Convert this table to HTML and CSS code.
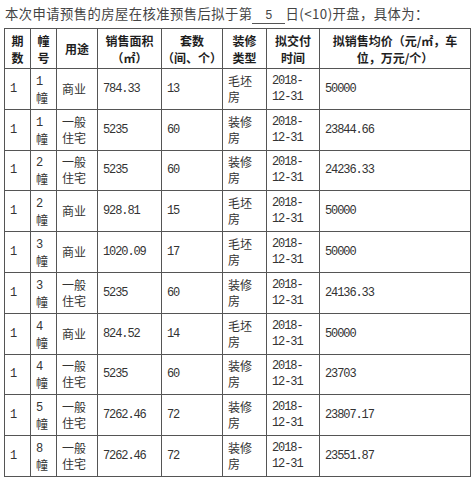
FILE: index.html
```html
<!DOCTYPE html>
<html lang="zh-CN">
<head>
<meta charset="utf-8">
<title>预售开盘</title>
<link rel="stylesheet" href="styles.css">
</head>
<body>
<p class="intro">本次申请预售的房屋在核准预售后拟于第<span class="blank">5</span>日(&lt;10)开盘，具体为：</p>
<table class="sale">
  <colgroup>
    <col class="c1"><col class="c2"><col class="c3"><col class="c4"><col class="c5"><col class="c6"><col class="c7"><col class="c8">
  </colgroup>
  <thead>
    <tr>
      <th>期<br>数</th>
      <th>幢<br>号</th>
      <th>用途</th>
      <th>销售面积<br>（㎡）</th>
      <th>套数<br>（间、个）</th>
      <th>装修<br>类型</th>
      <th>拟交付<br>时间</th>
      <th>拟销售均价（元/㎡，车<br>位，万元/个）</th>
    </tr>
  </thead>
  <tbody>
    <tr><td class="num">1</td><td><span class="num">1</span><br>幢</td><td>商业</td><td class="num">784.33</td><td class="num">13</td><td>毛坯<br>房</td><td class="num">2018-<br>12-31</td><td class="num">50000</td></tr>
    <tr><td class="num">1</td><td><span class="num">1</span><br>幢</td><td>一般<br>住宅</td><td class="num">5235</td><td class="num">60</td><td>装修<br>房</td><td class="num">2018-<br>12-31</td><td class="num">23844.66</td></tr>
    <tr><td class="num">1</td><td><span class="num">2</span><br>幢</td><td>一般<br>住宅</td><td class="num">5235</td><td class="num">60</td><td>装修<br>房</td><td class="num">2018-<br>12-31</td><td class="num">24236.33</td></tr>
    <tr><td class="num">1</td><td><span class="num">2</span><br>幢</td><td>商业</td><td class="num">928.81</td><td class="num">15</td><td>毛坯<br>房</td><td class="num">2018-<br>12-31</td><td class="num">50000</td></tr>
    <tr><td class="num">1</td><td><span class="num">3</span><br>幢</td><td>商业</td><td class="num">1020.09</td><td class="num">17</td><td>毛坯<br>房</td><td class="num">2018-<br>12-31</td><td class="num">50000</td></tr>
    <tr><td class="num">1</td><td><span class="num">3</span><br>幢</td><td>一般<br>住宅</td><td class="num">5235</td><td class="num">60</td><td>装修<br>房</td><td class="num">2018-<br>12-31</td><td class="num">24136.33</td></tr>
    <tr><td class="num">1</td><td><span class="num">4</span><br>幢</td><td>商业</td><td class="num">824.52</td><td class="num">14</td><td>毛坯<br>房</td><td class="num">2018-<br>12-31</td><td class="num">50000</td></tr>
    <tr><td class="num">1</td><td><span class="num">4</span><br>幢</td><td>一般<br>住宅</td><td class="num">5235</td><td class="num">60</td><td>装修<br>房</td><td class="num">2018-<br>12-31</td><td class="num">23703</td></tr>
    <tr><td class="num">1</td><td><span class="num">5</span><br>幢</td><td>一般<br>住宅</td><td class="num">7262.46</td><td class="num">72</td><td>装修<br>房</td><td class="num">2018-<br>12-31</td><td class="num">23807.17</td></tr>
    <tr><td class="num">1</td><td><span class="num">8</span><br>幢</td><td>一般<br>住宅</td><td class="num">7262.46</td><td class="num">72</td><td>装修<br>房</td><td class="num">2018-<br>12-31</td><td class="num">23551.87</td></tr>
  </tbody>
</table>
</body>
</html>
```
FILE: styles.css
```css
html, body {
  margin: 0;
  padding: 0;
  background: #ffffff;
}

body {
  font-family: "Noto Sans CJK SC", "Liberation Sans", sans-serif;
  color: #2a2a2a;
}

.intro {
  margin: 0;
  padding: 5px 0 0 5px;
  height: 23px;
  font-size: 13.3px;
  letter-spacing: 0.45px;
  line-height: 18px;
  color: #444444;
  white-space: nowrap;
}

.blank {
  display: inline-block;
  width: 33px;
  text-align: center;
  border-bottom: 1px solid #555555;
  line-height: 15px;
  font-family: "Liberation Sans", sans-serif;
  font-size: 12px;
  color: #444444;
}

.sale {
  margin-left: 4px;
  width: 466px;
  table-layout: fixed;
  border-collapse: collapse;
  font-size: 12px;
}

.c1 { width: 26px; }
.c2 { width: 26px; }
.c3 { width: 41px; }
.c4 { width: 64px; }
.c5 { width: 61px; }
.c6 { width: 44px; }
.c7 { width: 53px; }
.c8 { width: 151px; }

.sale th,
.sale td {
  border: 1px solid #555555;
  padding: 0 0 0 5px;
  vertical-align: middle;
  text-align: left;
  overflow: hidden;
}

.sale th {
  height: 39px;
  padding: 0;
  text-align: center;
  font-weight: bold;
  line-height: 17px;
  color: #1e1e1e;
}

.sale td {
  height: 39.8px;
  line-height: 16px;
  color: #333333;
}

.num {
  font-family: "Liberation Mono", "DejaVu Sans Mono", monospace;
  font-size: 12px;
  letter-spacing: -1.1px;
}
```
